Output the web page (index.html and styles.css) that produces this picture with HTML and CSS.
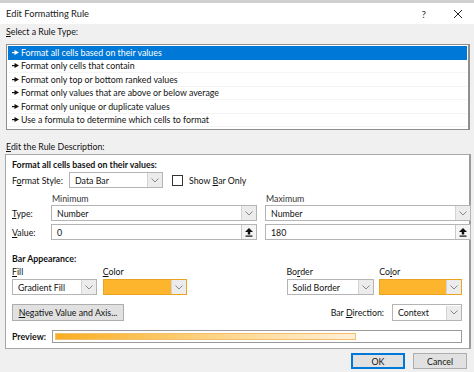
FILE: index.html
```html
<!DOCTYPE html>
<html lang="en">
<head>
  <meta charset="UTF-8">
  <title>Edit Formatting Rule</title>
  <link rel="stylesheet" href="styles.css">
</head>
<body>

  <!-- Title bar -->
  <div class="titlebar">
    <span class="title">Edit Formatting Rule</span>
    <span class="help">?</span>
    <svg class="close" width="10" height="10" viewBox="0 0 10 10">
      <path d="M1 1 L9 9 M9 1 L1 9" stroke="#222" stroke-width="1" fill="none"/>
    </svg>
  </div>

  <!-- Rule type list -->
  <div class="section-label"><u>S</u>elect a Rule Type:</div>
  <ul class="rule-list" id="ruleList"></ul>

  <!-- Rule description -->
  <div class="section-label desc-label"><u>E</u>dit the Rule Description:</div>
  <div class="panel">
    <div class="heading">Format all cells based on their values:</div>

    <div class="style-row">
      <span class="style-label">F<u>o</u>rmat Style:</span>
      <div class="dropdown style-dd">
        <span class="dd-text">Data Bar</span>
        <span class="dd-arrow"></span>
      </div>
      <span class="checkbox"></span>
      <span class="check-label">Show <u>B</u>ar Only</span>
    </div>

    <div class="minmax">
      <span></span>
      <span class="col-title">Minimum</span>
      <span class="col-title">Maximum</span>

      <span class="row-label"><u>T</u>ype:</span>
      <div class="dropdown">
        <span class="dd-text">Number</span>
        <span class="dd-arrow"></span>
      </div>
      <div class="dropdown">
        <span class="dd-text">Number</span>
        <span class="dd-arrow"></span>
      </div>

      <span class="row-label"><u>V</u>alue:</span>
      <div class="textbox">
        <span class="dd-text">0</span>
        <span class="ref-btn"></span>
      </div>
      <div class="textbox">
        <span class="dd-text">180</span>
        <span class="ref-btn"></span>
      </div>
    </div>

    <div class="heading bar-heading">Bar Appearance:</div>

    <div class="appearance">
      <div class="field fill-field">
        <span class="field-label"><u>F</u>ill</span>
        <div class="dropdown">
          <span class="dd-text">Gradient Fill</span>
          <span class="dd-arrow"></span>
        </div>
      </div>
      <div class="field color-field">
        <span class="field-label"><u>C</u>olor</span>
        <div class="dropdown color-dd">
          <span class="swatch"></span>
          <span class="dd-arrow"></span>
        </div>
      </div>
      <div class="field border-field">
        <span class="field-label">Bo<u>r</u>der</span>
        <div class="dropdown">
          <span class="dd-text">Solid Border</span>
          <span class="dd-arrow"></span>
        </div>
      </div>
      <div class="field color2-field">
        <span class="field-label">Co<u>l</u>or</span>
        <div class="dropdown color-dd">
          <span class="swatch"></span>
          <span class="dd-arrow"></span>
        </div>
      </div>
    </div>

    <div class="axis-row">
      <button class="btn neg-btn"><u>N</u>egative Value and Axis...</button>
      <span class="dir-label">Bar <u>D</u>irection:</span>
      <div class="dropdown dir-dd">
        <span class="dd-text">Context</span>
        <span class="dd-arrow"></span>
      </div>
    </div>

    <div class="preview-row">
      <span class="preview-label">Preview:</span>
      <div class="preview-box">
        <div class="preview-bar" style="width:74.5%"></div>
      </div>
    </div>
  </div>

  <!-- Dialog buttons -->
  <div class="dialog-buttons">
    <button class="btn ok-btn">OK</button>
    <button class="btn cancel-btn">Cancel</button>
  </div>

  <script>
    const rules = [
      "Format all cells based on their values",
      "Format only cells that contain",
      "Format only top or bottom ranked values",
      "Format only values that are above or below average",
      "Format only unique or duplicate values",
      "Use a formula to determine which cells to format"
    ];

    const arrowSvg = '<svg width="7" height="5" viewBox="0 0 7 5"><rect x="0" y="2" width="3" height="1.2"/><polygon points="2.5,0 7,2.6 2.5,5"/></svg>';
    const chevronSvg = '<svg width="8" height="5" viewBox="0 0 8 5"><polyline points="0.5,0.5 4,4 7.5,0.5" fill="none" stroke="#888" stroke-width="1"/></svg>';
    const refSvg = '<svg width="8" height="9" viewBox="0 0 8 9"><polygon points="4,0 8,4 5.2,4 5.2,6.5 2.8,6.5 2.8,4 0,4" fill="#111"/><rect x="0.5" y="7.5" width="7" height="1.2" fill="#111"/></svg>';

    const list = document.getElementById("ruleList");
    rules.forEach((text, index) => {
      const li = document.createElement("li");
      if (index === 0) li.className = "selected";
      li.innerHTML = `<span class="bullet">${arrowSvg}</span>${text}`;
      list.appendChild(li);
    });

    document.querySelectorAll(".dd-arrow").forEach(el => el.innerHTML = chevronSvg);
    document.querySelectorAll(".ref-btn").forEach(el => el.innerHTML = refSvg);
  </script>

</body>
</html>
```

FILE: styles.css
```css
body {
  margin: 0;
  background: #f0f0f0;
  font-family: Lato, "Noto Sans", sans-serif;
  font-size: 8.8px;
  color: #111;
  border-top: 3px solid #cfcfcf;
}

u {
  text-decoration: underline;
  text-underline-offset: 1px;
}

.titlebar {
  display: flex;
  align-items: center;
  height: 21px;
  background: white;
  padding-left: 6px;
}

.title {
  flex: 1;
  font-size: 9.3px;
  color: #222;
}

.help {
  font-size: 10px;
  color: #333;
  margin-right: 27px;
}

.close {
  margin-right: 11px;
}

.section-label {
  line-height: 12px;
  margin: 2px 0 0 6px;
}

.desc-label {
  margin-top: 11px;
}

.rule-list {
  list-style: none;
  margin: 6px 4px 0 6px;
  padding: 1px 1px 2px 1px;
  background: white;
  border: 1px solid #8f8f8f;
  border-right-width: 2px;
}

.rule-list li {
  height: 13.5px;
  line-height: 13.5px;
  padding-left: 4px;
  display: flex;
  align-items: center;
  border-bottom: 1px solid #f4f4f4;
  box-sizing: border-box;
}

.rule-list li.selected {
  background: #0078d7;
  color: white;
  border-bottom-color: #0078d7;
}

.bullet {
  display: inline-flex;
  margin-right: 2px;
  fill: #111;
}

.selected .bullet {
  fill: white;
}

.panel {
  margin: 1px 3px 0 5px;
  background: white;
  border: 1px solid #a8a8a8;
  border-right: 2px solid #9a9a9a;
  padding: 3px 7px 5px 6px;
}

.heading {
  font-weight: bold;
  line-height: 14px;
}

.bar-heading {
  margin-top: 12px;
}

.style-row {
  display: flex;
  align-items: center;
  height: 16px;
}

.style-label {
  width: 57px;
}

.dropdown, .textbox {
  display: flex;
  align-items: center;
  height: 16px;
  box-sizing: border-box;
  border: 1px solid #b4b4b4;
  background: white;
}

.dd-text {
  flex: 1;
  padding-left: 5px;
  white-space: nowrap;
  overflow: hidden;
}

.dd-arrow {
  width: 14px;
  height: 14px;
  display: flex;
  align-items: center;
  justify-content: center;
  background: #ececec;
  border-left: 1px solid #d4d4d4;
}

.style-dd {
  width: 94px;
}

.checkbox {
  width: 9px;
  height: 9px;
  border: 1px solid #333;
  margin-left: 9px;
  background: white;
}

.check-label {
  margin-left: 6px;
}

.minmax {
  display: grid;
  grid-template-columns: 31px 206px 206px;
  column-gap: 8px;
  row-gap: 3px;
  margin-top: 5px;
  align-items: center;
}

.minmax .col-title {
  line-height: 12px;
  color: #333;
  padding-left: 1px;
  margin-bottom: -3px;
}

.row-label {
  margin-right: -8px;
}

.ref-btn {
  width: 14px;
  height: 14px;
  display: flex;
  align-items: center;
  justify-content: center;
  border-left: 1px solid #c8c8c8;
  background: #f4f4f4;
}

.appearance {
  display: flex;
}

.field {
  display: flex;
  flex-direction: column;
}

.field-label {
  line-height: 12px;
  margin-bottom: 1px;
}

.fill-field { width: 85px; }
.color-field { width: 84px; margin-left: 6px; }
.border-field { width: 88px; margin-left: 100px; }
.color2-field { width: 83px; margin-left: 5px; }

.color-dd {
  border-color: #e9a424;
}

.swatch {
  flex: 1;
  align-self: stretch;
  background: #fdb52e;
}

.axis-row {
  display: flex;
  align-items: center;
  margin-top: 9px;
  height: 17px;
}

.btn {
  font-family: inherit;
  font-size: 8.8px;
  color: #111;
  background: #e1e1e1;
  border: 1px solid #adadad;
  padding: 0;
  height: 17px;
}

.neg-btn {
  width: 112px;
}

.dir-label {
  margin-left: auto;
  margin-right: 8px;
}

.dir-dd {
  width: 70px;
  height: 17px;
}

.preview-row {
  display: flex;
  align-items: center;
  margin-top: 9px;
}

.preview-label {
  font-weight: bold;
  width: 40px;
}

.preview-box {
  flex: 1;
  height: 13px;
  box-sizing: border-box;
  border: 1px solid #9a9a9a;
  padding: 2px;
}

.preview-bar {
  height: 100%;
  box-sizing: border-box;
  border: 1px solid #f3c06a;
  background: linear-gradient(to right, #f9ae22, #fcd58a 55%, #fff0d8);
}

.dialog-buttons {
  display: flex;
  justify-content: flex-end;
  gap: 8px;
  margin: 4px 7px 0 0;
}

.ok-btn {
  width: 54px;
  height: 16px;
  border: 2px solid #0078d7;
}

.cancel-btn {
  width: 54px;
  height: 16px;
}
```
